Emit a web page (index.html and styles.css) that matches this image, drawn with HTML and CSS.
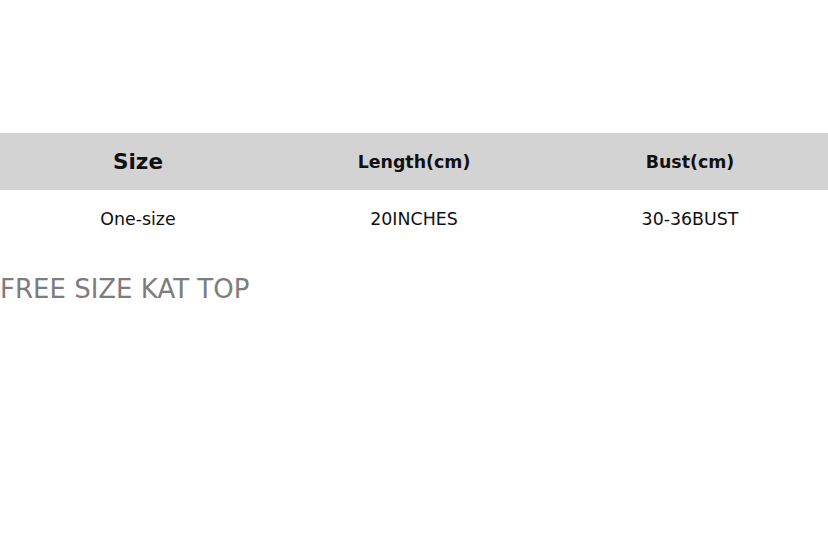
FILE: index.html
```html
<!DOCTYPE html>
<html>
<head>
<meta charset="utf-8">
<link rel="stylesheet" href="styles.css">
</head>
<body>
<div class="page">
  <table class="size-table">
    <thead>
      <tr>
        <th class="th-size">Size</th>
        <th>Length(cm)</th>
        <th>Bust(cm)</th>
      </tr>
    </thead>
    <tbody>
      <tr>
        <td>One-size</td>
        <td>20INCHES</td>
        <td>30-36BUST</td>
      </tr>
    </tbody>
  </table>
  <p class="note">FREE SIZE KAT TOP</p>
</div>
</body>
</html>
```
FILE: styles.css
```css
html, body {
  margin: 0;
  padding: 0;
  background: #ffffff;
}
.page {
  padding-top: 133px;
  font-family: "DejaVu Sans", Verdana, sans-serif;
  color: #111;
}
.size-table {
  width: 100%;
  border-collapse: collapse;
  table-layout: fixed;
}
.size-table th {
  background: #d3d3d3;
  height: 57px;
  padding: 0;
  font-size: 17.4px;
  font-weight: bold;
  text-align: center;
  vertical-align: middle;
}
.size-table th.th-size {
  font-size: 21.5px;
}
.size-table td {
  height: 56px;
  padding: 1px 0 0 0;
  font-size: 17.4px;
  text-align: center;
  vertical-align: middle;
}
.note {
  margin: 27px 0 0 0;
  font-size: 26px;
  color: #7d7d7d;
  line-height: 30px;
}
```
